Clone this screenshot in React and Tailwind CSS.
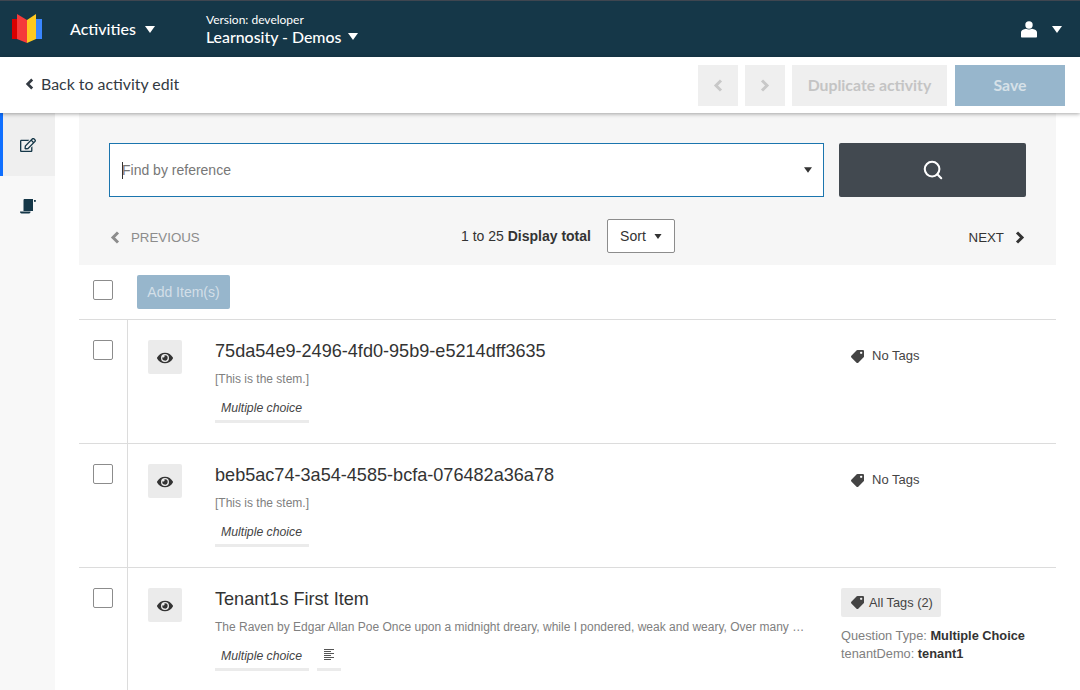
import React from 'react';
import { Search } from 'lucide-react';
import { FaEye, FaRegEdit, FaTag } from 'react-icons/fa';

const Caret = ({ className }) => (
  <svg viewBox="0 0 10 7" className={className} fill="currentColor">
    <path d="M0 0h10L5 7z" />
  </svg>
);

const ChevLeft = ({ className }) => (
  <svg viewBox="0 0 10 13" className={className} fill="none" stroke="currentColor" strokeWidth="3">
    <path d="M8 1.500L3 6.500l5 5" />
  </svg>
);

const ChevRight = ({ className }) => (
  <svg viewBox="0 0 10 13" className={className} fill="none" stroke="currentColor" strokeWidth="3">
    <path d="M2 1.500l5 5l-5 5" />
  </svg>
);

const Logo = () => (
  <svg viewBox="0 0 30 30" className="w-[30px] h-[30px]">
    <path d="M0 5h5v20H0z" fill="#d90000" />
    <path d="M5 0l10 6v23l-10 -4z" fill="#f53a3a" />
    <path d="M15 6l9 -6v25l-9 4z" fill="#ffc91f" />
    <path d="M24 5h6v20h-6z" fill="#3a86ff" />
  </svg>
);

const UserIcon = () => (
  <svg viewBox="0 0 16 17" className="w-[16px] h-[17px]" fill="currentColor">
    <circle cx="8" cy="4" r="3.700" />
    <path d="M1 16.500c-.6 0 -1 -.4 -1 -1v-4c0 -1.500 .8 -2.500 2.500 -3l2.500 -.8c1.800 1 4.200 1 6 0l2.500 .8c1.700 .5 2.500 1.500 2.500 3v4c0 .6 -.4 1 -1 1z" />
  </svg>
);

const ScrollIcon = () => (
  <svg viewBox="0 0 16 15" className="w-4 h-[15px]" fill="currentColor">
    <path d="M4 0h9v12H3.500V2.500C3.500 1 3.500 .5 4 0z" />
    <path d="M0 12.500h10.500c0 1 -.5 2 -1.500 2H1.500C.5 14.500 0 13.500 0 12.500z" />
    <rect x="14" y="1" width="1.800" height="1.800" />
  </svg>
);

const Row = ({ title, stem, extra, children }) => (
  <div className="flex h-[124px] border-b border-[#dcdcdc] last:border-b-0">
    <div className="w-[49px] shrink-0 border-r border-[#dcdcdc] pl-[14px] pt-5">
      <div className="w-5 h-5 bg-white border border-[#8c8c8c] rounded-[2px]" />
    </div>
    <div className="w-[87px] shrink-0 pl-5 pt-5">
      <div className="w-[34px] h-[34px] pt-[1px] bg-[#ebebeb] rounded-[2px] flex items-center justify-center text-[#333]">
        <FaEye size={16} />
      </div>
    </div>
    <div className="w-[626px] shrink-0 pt-[19px]">
      <div className="text-[18.1px] leading-6 text-[#333]">{title}</div>
      <div className="mt-[7px] text-xs leading-[18px] text-[#808080] whitespace-nowrap">{stem}</div>
      <div className="flex gap-2 mt-[8px]">
        <div className="w-[94px] h-[27px] border-b-[3px] border-[#ebebeb] pl-[6px] pt-[3px] text-[12.25px] leading-[18px] italic text-[#444]">Multiple choice</div>
        {extra && (
          <div className="w-6 h-[27px] border-b-[3px] border-[#ebebeb] flex items-start justify-center pt-[4px]">
            <svg viewBox="0 0 12 12" className="w-3 h-3 text-[#555]" stroke="currentColor" strokeWidth="1">
              <path d="M1 1.500h10M1 3.500h7M1 5.500h10M1 7.500h7M1 9.500h10M1 11.500h7" />
            </svg>
          </div>
        )}
      </div>
    </div>
    <div className="flex-1 pt-5">{children}</div>
  </div>
);

const TagIcon = () => <FaTag size={13} className="-scale-x-100 text-[#444]" />;

const NoTags = () => (
  <div className="flex items-center gap-[8px] pl-[10px] pt-[6px] text-[13px] leading-5 text-[#444]">
    <TagIcon />
    <span>No Tags</span>
  </div>
);

const App = () => {
  return (
    <div className="h-[690px] w-[1080px] overflow-hidden bg-white font-['Liberation_Sans',sans-serif]">
      {/* Top bar */}
      <div className="h-[57px] bg-[#153748] border-t border-[#3f4650] flex items-center text-white font-['Lato',sans-serif]">
        <div className="ml-3 w-[30px]"><Logo /></div>
        <div className="ml-7 flex items-center gap-2 text-[16px] font-medium">
          Activities
          <Caret className="w-[10px] h-[7px] ml-[1px]" />
        </div>
        <div className="ml-[51px] flex flex-col">
          <span className="text-xs leading-[15px]">Version: developer</span>
          <span className="flex items-center gap-[7px] text-[15.9px] leading-[20px] font-medium">
            Learnosity - Demos
            <Caret className="w-[10px] h-[7px]" />
          </span>
        </div>
        <div className="ml-auto mr-[18px] flex items-center gap-[15px]">
          <UserIcon />
          <Caret className="w-[10px] h-[7px]" />
        </div>
      </div>

      {/* Sub header */}
      <div className="relative z-10 h-[56px] bg-white shadow-[0_1px_4px_rgba(0,0,0,0.35)] flex items-center font-['Lato',sans-serif]">
        <div className="ml-[25px] pb-[2px] flex items-center gap-[7px] text-[15.9px] text-[#333a42]">
          <ChevLeft className="w-[9px] h-[12px]" />
          Back to activity edit
        </div>
        <div className="ml-auto mr-[15px] flex gap-[7px] mt-[1px] text-[15.8px] font-bold">
          <div className="w-10 h-[41px] bg-[#efefef] text-[#c8c8c8] flex items-center justify-center"><ChevLeft className="w-[10px] h-[13px]" /></div>
          <div className="w-10 h-[41px] bg-[#efefef] text-[#c8c8c8] flex items-center justify-center"><ChevRight className="w-[10px] h-[13px]" /></div>
          <div className="w-[155px] h-[41px] pb-[2px] bg-[#efefef] text-[#c4c4c4] flex items-center justify-center">Duplicate activity</div>
          <div className="w-[110px] h-[41px] pb-[2px] ml-[1px] bg-[#97b6cc] text-[#d6e1e8] flex items-center justify-center">Save</div>
        </div>
      </div>

      <div className="flex h-[577px]">
        {/* Side tabs */}
        <div className="w-[55px] shrink-0 bg-[#f8f8f8]">
          <div className="h-[63px] bg-[#efefef] border-l-[3px] border-[#0f6fff] flex items-center justify-center pr-[3px] text-[#153748]">
            <FaRegEdit size={16} />
          </div>
          <div className="h-[60px] flex items-center justify-center text-[#153748]">
            <ScrollIcon />
          </div>
        </div>

        <div className="ml-6 w-[977px]">
          {/* Search panel */}
          <div className="h-[152px] bg-[#f6f6f6] pt-[30px] px-[30px]">
            <div className="flex gap-[15px]">
              <div className="relative w-[715px] h-[54px] bg-white border border-[#1b75ae] flex items-center pl-3 text-sm text-[#777]">
                <span className="absolute left-3 top-[18px] w-px h-[17px] bg-[#333]" />
                Find by reference
                <Caret className="absolute right-[11px] top-[23px] w-2 h-[6px] text-[#333]" />
              </div>
              <div className="w-[187px] h-[54px] bg-[#424950] rounded-[2px] flex items-center justify-center text-white">
                <Search size={22} strokeWidth={2.25} />
              </div>
            </div>
            <div className="flex items-center h-[34px] mt-[22px] text-sm">
              <div className="w-[352px] pl-[1px] pt-[4px] flex items-center gap-[11px] text-[13.3px] text-[#8c8c8c]">
                <ChevLeft className="w-[10px] h-[13px]" />
                PREVIOUS
              </div>
              <div className="text-[#333]">1 to 25 <span className="font-bold">Display total</span></div>
              <div className="ml-4 w-[68px] h-[34px] bg-white border border-[#8c8c8c] rounded-[2px] flex items-center justify-center gap-2 text-[#333]">
                Sort
                <Caret className="w-2 h-[5px]" />
              </div>
              <div className="ml-auto mr-[1px] pt-[4px] flex items-center gap-[11px] text-[13.3px] text-[#333]">
                NEXT
                <ChevRight className="w-[10px] h-[13px]" />
              </div>
            </div>
          </div>

          {/* Toolbar */}
          <div className="h-[55px] border-b border-[#dcdcdc] flex items-start pt-[10px] pl-[14px]">
            <div className="w-5 h-5 mt-[5px] bg-white border border-[#8c8c8c] rounded-[2px]" />
            <div className="ml-[24px] w-[93px] h-[34px] bg-[#97b6cc] rounded-[2px] text-[#d3dfe8] text-sm flex items-center justify-center">Add Item(s)</div>
          </div>

          <Row title="75da54e9-2496-4fd0-95b9-e5214dff3635" stem="[This is the stem.]"><NoTags /></Row>
          <Row title="beb5ac74-3a54-4585-bcfa-076482a36a78" stem="[This is the stem.]"><NoTags /></Row>
          <Row
            title="Tenant1s First Item"
            stem="The Raven by Edgar Allan Poe Once upon a midnight dreary, while I pondered, weak and weary, Over many …"
            extra
          >
            <div className="flex items-center gap-[5px] h-[29px] w-[100px] bg-[#ebebeb] rounded-[2px] pl-[10px] text-[12.8px] text-[#444]">
              <TagIcon />
              All Tags (2)
            </div>
            <div className="mt-[10px] text-[12.8px] leading-[18px] text-[#808080] whitespace-nowrap">
              Question Type: <span className="font-bold text-[#333]">Multiple Choice</span>
              <br />
              tenantDemo: <span className="font-bold text-[#333]">tenant1</span>
            </div>
          </Row>
        </div>
      </div>
    </div>
  );
};

export default App;
